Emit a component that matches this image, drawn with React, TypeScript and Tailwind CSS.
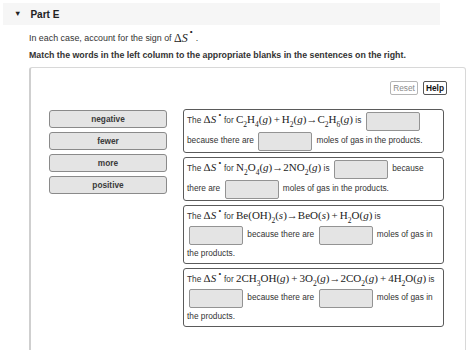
import React from "react";

const Blank = () => (
  <span className="inline-block w-[54px] h-[19px] my-[0.5px] align-middle bg-[#e4e4e4] border border-[#939393] rounded-[2px] mx-[2px]" />
);

const M = ({ children }: { children: React.ReactNode }) => (
  <span className="font-['Liberation_Serif',serif] text-[11px] text-[#222]">{children}</span>
);
const I = ({ children }: { children: React.ReactNode }) => <i>{children}</i>;
const Sub = ({ children }: { children: React.ReactNode }) => (
  <sub className="text-[7.5px] align-[-2px] leading-none">{children}</sub>
);
const Op = ({ children }: { children: React.ReactNode }) => (
  <span className="mx-[2px]">{children}</span>
);
const DS = () => (
  <M>
    Δ<I>S</I>
    <sup className="text-[6px] align-[4px] leading-none ml-[1.5px]">∘</sup>
  </M>
);

const Box = ({ children }: { children: React.ReactNode }) => (
  <div className="border border-[#5a5a5a] rounded-[3px] pl-[3px] pr-[5px] py-[1px] leading-[17px] text-[8.3px] text-[#333]">
    {children}
  </div>
);

const Word = ({ t }: { t: string }) => (
  <div className="h-[18px] flex items-center justify-center bg-[#e4e4e4] border border-[#8a8a8a] rounded-[3px] text-[8.3px] font-bold text-[#3a3a3a]">
    {t}
  </div>
);

export default function App() {
  return (
    <div className="w-[474px] h-[350px] bg-white overflow-hidden font-['Liberation_Sans',Arial,sans-serif] text-[#333]">
      <div className="ml-[3px] mt-[3px] w-[437px] h-[22px] bg-[#f6f6f6] flex items-center">
        <span className="ml-[11px] text-[7.5px] text-[#222]">▼</span>
        <span className="ml-[9px] text-[10px] font-bold text-[#222]">Part E</span>
      </div>
      <div className="ml-[29px] mt-[7px] text-[8.9px] leading-[12px] h-[12px] flex items-center">
        <span>In each case, account for the sign of&nbsp;</span>
        <M>
          <span className="text-[12px]">
            Δ<I>S</I>
          </span>
          <sup className="text-[7px] align-[5px] ml-[1.5px]">∘</sup>
        </M>
        <span>&nbsp;.</span>
      </div>
      <div className="ml-[29px] mt-[5px] text-[8.8px] font-bold leading-[12px] text-[#333]">
        Match the words in the left column to the appropriate blanks in the sentences on the right.
      </div>
      <div className="ml-[29px] mt-[6px] w-[437px] h-[300px] border border-[#d8d8d8] border-l-[2px] border-l-[#cfcfcf] rounded-tl-[3px] rounded-tr-[3px] px-[18px]">
        <div className="flex justify-end gap-[5px] mt-[13px]">
          <button className="h-[14px] w-[28px] border border-[#b5b5b5] rounded-[2px] text-[8.3px] text-[#8a8a8a] bg-white leading-none">
            Reset
          </button>
          <button className="h-[14px] w-[24px] border border-[#555] rounded-[2px] text-[8.3px] font-bold text-[#111] bg-white leading-none">
            Help
          </button>
        </div>
        <div className="flex gap-[16px] mt-[14px]">
          <div className="w-[118px] flex flex-col gap-[4px] pt-[1px]">
            <Word t="negative" />
            <Word t="fewer" />
            <Word t="more" />
            <Word t="positive" />
          </div>
          <div className="w-[261px] flex flex-col gap-[4px]">
            <Box>
              The <DS /> for{" "}
              <M>
                C<Sub>2</Sub>H<Sub>4</Sub>(<I>g</I>)<Op>+</Op>H<Sub>2</Sub>(<I>g</I>)→C<Sub>2</Sub>H<Sub>6</Sub>(<I>g</I>)
              </M>{" "}
              is <Blank />
              <br />
              because there are <Blank /> moles of gas in the products.
            </Box>
            <Box>
              The <DS /> for{" "}
              <M>
                N<Sub>2</Sub>O<Sub>4</Sub>(<I>g</I>)→2NO<Sub>2</Sub>(<I>g</I>)
              </M>{" "}
              is <Blank /> because there are <Blank /> moles of gas in the products.
            </Box>
            <Box>
              The <DS /> for{" "}
              <M>
                Be(OH)<Sub>2</Sub>(<I>s</I>)→BeO(<I>s</I>)<Op>+</Op>H<Sub>2</Sub>O(<I>g</I>)
              </M>{" "}
              is <Blank /> because there are <Blank /> moles of gas in the products.
            </Box>
            <Box>
              The <DS /> for{" "}
              <M>
                2CH<Sub>3</Sub>OH(<I>g</I>)<Op>+</Op>3O<Sub>2</Sub>(<I>g</I>)→2CO<Sub>2</Sub>(<I>g</I>)<Op>+</Op>4H<Sub>2</Sub>O(<I>g</I>)
              </M>{" "}
              is <Blank /> because there are <Blank /> moles of gas in the products.
            </Box>
          </div>
        </div>
      </div>
    </div>
  );
}
